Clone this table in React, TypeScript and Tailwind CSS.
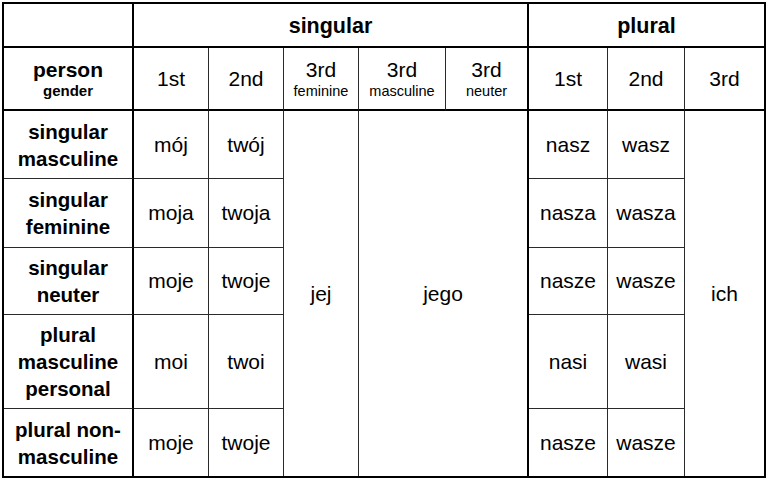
import React from "react";

const thin = "border-[#2a2a2a]";

function Cell({
  className = "",
  children,
}: {
  className?: string;
  children?: React.ReactNode;
}) {
  return (
    <div className={`flex flex-col items-center justify-center text-center ${className}`}>
      {children}
    </div>
  );
}

const rows = [
  { label: ["singular", "masculine"], my: "mój", your: "twój", our: "nasz", yours: "wasz" },
  { label: ["singular", "feminine"], my: "moja", your: "twoja", our: "nasza", yours: "wasza" },
  { label: ["singular", "neuter"], my: "moje", your: "twoje", our: "nasze", yours: "wasze" },
  { label: ["plural", "masculine", "personal"], my: "moi", your: "twoi", our: "nasi", yours: "wasi" },
  { label: ["plural non-", "masculine"], my: "moje", your: "twoje", our: "nasze", yours: "wasze" },
];

export default function App() {
  return (
    <div className="w-[768px] h-[481px] bg-white pt-[2px] pl-[2px] text-[21px] text-black [font-family:'Liberation_Sans',Arial,sans-serif]">
      <div className="w-[764px] h-[476px] border-2 border-black grid grid-cols-[130px_75px_75px_75px_87px_83px_79px_77px_79px] grid-rows-[44px_63px_68px_69px_67px_94px_67px]">
        {/* top header row */}
        <Cell className="border-r-2 border-b-2 border-black" />
        <Cell className="col-span-5 border-r-2 border-b-2 border-black font-bold text-[21.5px] pt-[2px]">singular</Cell>
        <Cell className="col-span-3 border-b-2 border-black font-bold text-[21.5px] pt-[2px]">plural</Cell>

        {/* person row */}
        <Cell className="border-r-2 border-b-2 border-black font-bold leading-[24px]">
          <span>person</span>
          <span className="text-[15px] leading-[18px]">gender</span>
        </Cell>
        <Cell className={`border-r border-b-2 ${thin} border-b-black`}>1st</Cell>
        <Cell className={`border-r border-b-2 ${thin} border-b-black`}>2nd</Cell>
        <Cell className={`border-r border-b-2 ${thin} border-b-black leading-[24px]`}>
          <span>3rd</span>
          <span className="text-[14.5px] leading-[18px]">feminine</span>
        </Cell>
        <Cell className={`border-r border-b-2 ${thin} border-b-black leading-[24px]`}>
          <span>3rd</span>
          <span className="text-[14.5px] leading-[18px]">masculine</span>
        </Cell>
        <Cell className="border-r-2 border-b-2 border-black leading-[24px]">
          <span>3rd</span>
          <span className="text-[14.5px] leading-[18px]">neuter</span>
        </Cell>
        <Cell className={`border-r border-b-2 ${thin} border-b-black`}>1st</Cell>
        <Cell className={`border-r border-b-2 ${thin} border-b-black`}>2nd</Cell>
        <Cell className="border-b-2 border-black">3rd</Cell>

        {rows.map((r, i) => {
          const last = i === rows.length - 1;
          const bottom = last ? "" : `border-b ${thin}`;
          return (
            <React.Fragment key={i}>
              <Cell className={`border-r-2 border-r-black ${bottom} font-bold leading-[27px] text-[20.5px]`}>
                {r.label.map((l) => (
                  <span key={l}>{l}</span>
                ))}
              </Cell>
              <Cell className={`border-r ${thin} ${bottom}`}>{r.my}</Cell>
              <Cell className={`border-r ${thin} ${bottom}`}>{r.your}</Cell>
              {i === 0 && (
                <>
                  <Cell className={`row-span-5 border-r ${thin}`}>jej</Cell>
                  <Cell className="row-span-5 col-span-2 border-r-2 border-black">jego</Cell>
                </>
              )}
              <Cell className={`border-r ${thin} ${bottom}`}>{r.our}</Cell>
              <Cell className={`border-r ${thin} ${bottom}`}>{r.yours}</Cell>
              {i === 0 && <Cell className="row-span-5">ich</Cell>}
            </React.Fragment>
          );
        })}
      </div>
    </div>
  );
}
